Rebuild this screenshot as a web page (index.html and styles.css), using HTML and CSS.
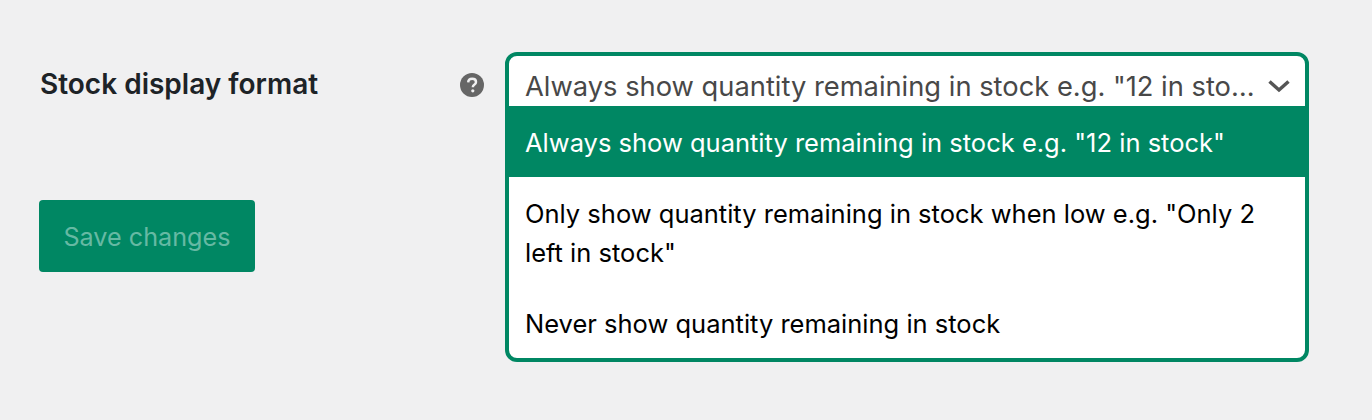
FILE: index.html
```html
<!DOCTYPE html>
<html lang="en">
  <head>
    <meta charset="UTF-8" />
    <meta name="viewport" content="width=device-width, initial-scale=1.0" />
    <title>Stock display format</title>
    <link rel="stylesheet" href="styles.css">
  </head>
  <body>
    <div class="form-row">
      <div class="form-label">Stock display format</div>
      <svg class="help-tip" viewBox="0 0 24 24" aria-hidden="true">
        <circle cx="12" cy="12" r="12" fill="#666"/>
        <path d="M8.200 9.400c.1-2.300 1.800-3.600 4-3.600 2.200 0 3.800 1.200 3.800 3.100 0 1.500-.8 2.200-1.800 2.900-.9.600-1.300 1-1.300 2v.4" fill="none" stroke="#f0f0f1" stroke-width="2.500"/>
        <circle cx="12.800" cy="17.800" r="1.600" fill="#f0f0f1"/>
      </svg>
      <div class="select-box">
        <div class="select-head">
          <span class="select-value">Always show quantity remaining in stock e.g. "12 in stock"</span>
          <svg class="select-arrow" viewBox="0 0 24 14" aria-hidden="true">
            <path d="M2.500 2.500 12 11l9.500-8.500" fill="none" stroke="#555" stroke-width="3.500"/>
          </svg>
        </div>
        <ul class="options">
          <li class="option selected">Always show quantity remaining in stock e.g. "12 in stock"</li>
          <li class="option">Only show quantity remaining in stock when low e.g. "Only 2 left in stock"</li>
          <li class="option">Never show quantity remaining in stock</li>
        </ul>
      </div>
    </div>
    <button class="save-btn" disabled>Save changes</button>
  </body>
</html>
```

FILE: styles.css
```css
* {
  box-sizing: border-box;
}

body {
  margin: 0;
  height: 420px;
  padding: 52px 0 0 39px;
  overflow: hidden;
  background-color: #f0f0f1;
  font-family: Inter, "Liberation Sans", sans-serif;
  font-size: 25.500px;
  color: #000;
}

.form-row {
  display: flex;
  align-items: flex-start;
  height: 148px;
}

.form-label {
  width: 421px;
  padding: 15px 0 0 1px;
  font-size: 28px;
  line-height: 34px;
  font-weight: 600;
  color: #1d2327;
}

.help-tip {
  width: 24px;
  height: 24px;
  margin-top: 21px;
  margin-right: 21px;
  flex-shrink: 0;
}

.select-box {
  position: relative;
  z-index: 1;
  width: 804px;
  height: 310px;
  background-color: #fff;
  border: 4px solid #008763;
  border-radius: 12px;
  overflow: hidden;
}

.select-head {
  display: flex;
  align-items: center;
  height: 50px;
  padding: 10px 14px 0 16px;
  font-size: 27.300px;
  color: #484848;
}

.select-value {
  flex: 1;
  min-width: 0;
  white-space: nowrap;
  overflow: hidden;
  text-overflow: ellipsis;
}

.select-arrow {
  width: 24px;
  height: 14px;
  margin-left: 12px;
  flex-shrink: 0;
}

.options {
  list-style: none;
  margin: 0;
  padding: 0;
}

.option {
  padding: 17px 16px 15px;
  line-height: 39px;
}

.option.selected {
  background-color: #008763;
  color: #fff;
}

.save-btn {
  display: block;
  width: 216px;
  height: 72px;
  padding: 2px 0 0;
  border: none;
  border-radius: 4px;
  background-color: #008763;
  font-family: inherit;
  font-size: 25.200px;
  color: #66b9a3;
}
```
